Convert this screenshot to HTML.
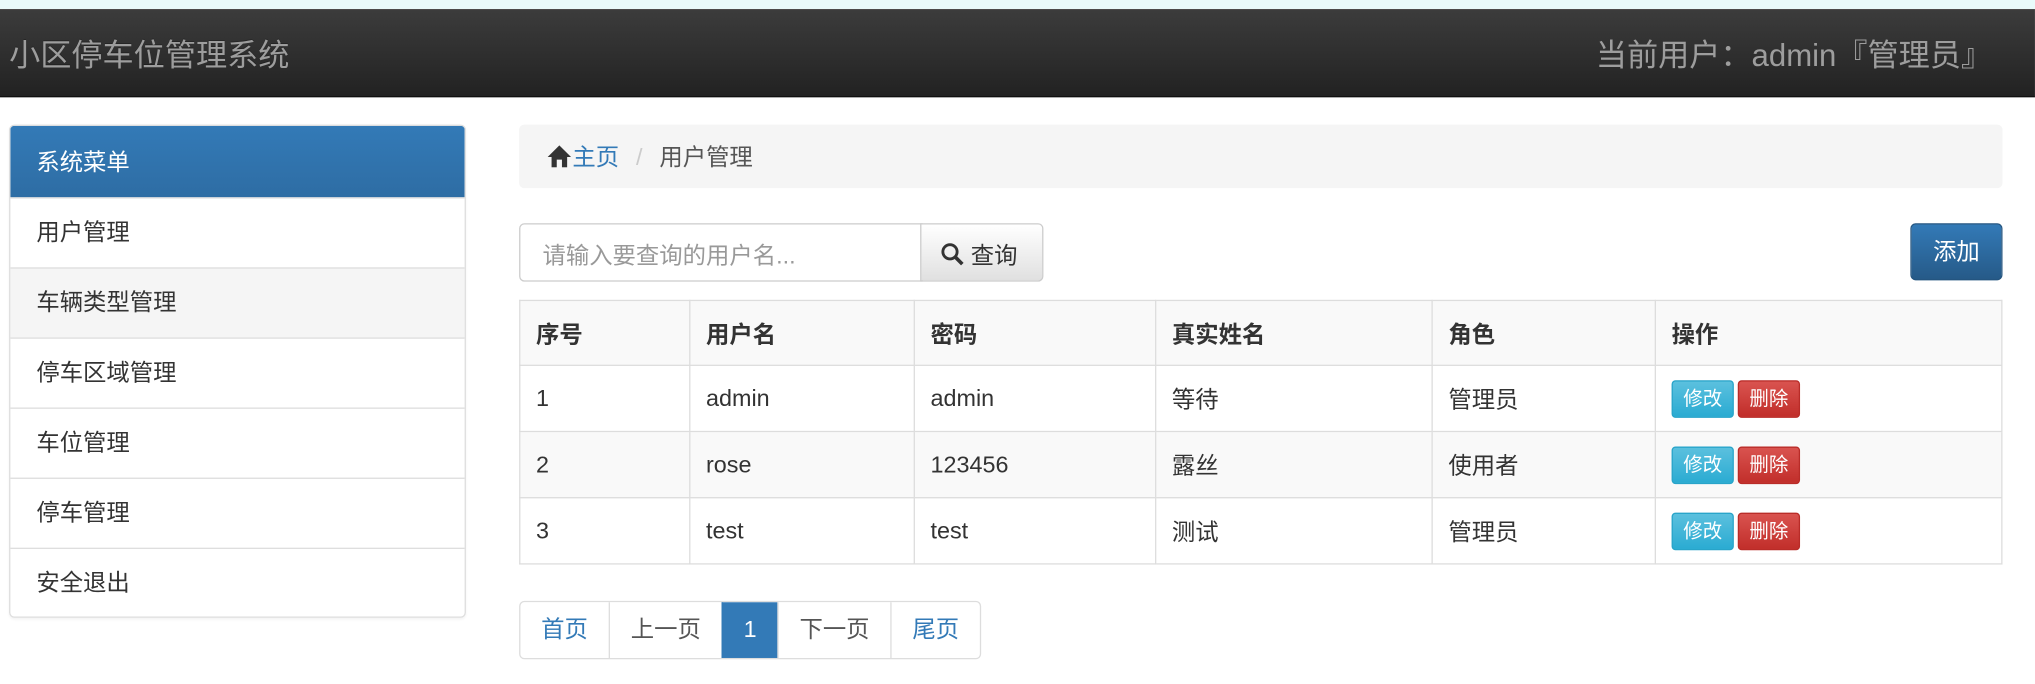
<!DOCTYPE html>
<html><head><meta charset="utf-8"><style>
*{box-sizing:border-box;margin:0;padding:0}
html,body{width:2035px;height:684px;overflow:hidden;background:#fff}
#w{width:1568px;height:527px;transform:scale(1.2978);transform-origin:0 0;position:relative;font-family:"Liberation Sans","Noto Sans CJK SC",sans-serif;color:#333;font-size:18px}
.a{position:absolute}
#top{left:0;top:0;width:1568px;height:7px;background:#e9fbfb}
#nav{left:0;top:7px;width:1568px;height:68px;background:linear-gradient(#3c3c3c,#222);border-bottom:1px solid #080808}
#nav .t{position:absolute;left:7px;top:16px;font-size:24px;color:#9d9d9d;text-shadow:0 -1px 0 rgba(0,0,0,.25)}
#nav .u{position:absolute;right:33px;top:16px;font-size:24px;color:#9d9d9d}
#side{left:7px;top:96px;width:352px;height:380px;border:1px solid #ddd;border-radius:4px;overflow:hidden;box-shadow:0 1px 2px rgba(0,0,0,.05)}
#side .h{height:55px;background:linear-gradient(#337ab7,#2e6da4);color:#fff;padding:14px 20px;font-size:18px}
#side .i{height:54px;border-top:1px solid #ddd;padding:12px 20px;font-size:18px}
#bc{left:400px;top:96px;width:1143px;height:49px;background:#f5f5f5;border-radius:4px;padding:11px 21px;font-size:18px}
#bc .l{color:#337ab7}
#inp{left:400px;top:172px;width:311px;height:45px;border:1px solid #ccc;border-radius:4px 0 0 4px;padding:10px 17px;color:#999}
#sb{left:709px;top:172px;width:95px;height:45px;border:1px solid #ccc;border-radius:0 4px 4px 0;background:linear-gradient(#fff,#e0e0e0);padding:10px 15px}
#add{left:1472px;top:172px;width:71px;height:44px;border-radius:4px;background:linear-gradient(#337ab7,#265a88);border:1px solid #245580;color:#fff;text-align:center;line-height:42px}
table{position:absolute;left:400px;top:231px;width:1143px;border-collapse:collapse}
td,th{border:1px solid #ddd;padding:0 12px;text-align:left;font-size:18px;vertical-align:middle}
th{height:50px;font-weight:bold;background:#f9f9f9}
td{height:51px}
tr.s td{background:#f9f9f9}
.b{display:inline-block;width:48px;height:29px;border-radius:3px;color:#fff;font-size:15px;text-align:center;line-height:27px;vertical-align:middle}
.e{background:linear-gradient(#5bc0de,#2aabd2);border:1px solid #28a4c9}
.d{background:linear-gradient(#d9534f,#c12e2a);border:1px solid #b92c28;margin-left:3px}
#pg{left:400px;top:463px;height:45px;display:flex;border:1px solid #ddd;border-radius:4px;overflow:hidden}
#pg div{height:43px;line-height:43px;padding:0 16px;border-left:1px solid #ddd;color:#337ab7}
#pg div:first-child{border-left:none}
#pg .g{color:#555}
#pg .ac{background:#337ab7;color:#fff;border-color:#337ab7}
</style></head><body><div id="w">
<div class="a" id="top"></div>
<div class="a" id="nav"><div class="t">小区停车位管理系统</div><div class="u">当前用户：admin『管理员』</div></div>
<div class="a" id="side"><div class="h">系统菜单</div>
<div class="i">用户管理</div><div class="i" style="background:#f5f5f5">车辆类型管理</div><div class="i">停车区域管理</div><div class="i">车位管理</div><div class="i">停车管理</div><div class="i">安全退出</div></div>
<div class="a" id="bc"><svg width="20" height="18" viewBox="0 0 20 18" style="vertical-align:-2px"><path d="M10 1 L1 10 H4 V18 H8 V12 H12 V18 H16 V10 H19 Z" fill="#333"/></svg><span class="l">主页</span> <span style="color:#ccc;padding:0 8px">/</span> <span style="color:#555">用户管理</span></div>
<div class="a" id="inp">请输入要查询的用户名...</div>
<div class="a" id="sb"><svg width="18" height="18" viewBox="0 0 18 18" style="vertical-align:-2px"><circle cx="7" cy="7" r="5.5" stroke="#333" stroke-width="2.2" fill="none"/><path d="M11 11 L16.5 16.5" stroke="#333" stroke-width="2.8"/></svg> 查询</div>
<div class="a" id="add">添加</div>
<table>
<tr><th style="width:131px">序号</th><th style="width:173px">用户名</th><th style="width:186px">密码</th><th style="width:213px">真实姓名</th><th style="width:172px">角色</th><th>操作</th></tr>
<tr><td>1</td><td>admin</td><td>admin</td><td>等待</td><td>管理员</td><td><span class="b e">修改</span><span class="b d">删除</span></td></tr>
<tr class="s"><td>2</td><td>rose</td><td>123456</td><td>露丝</td><td>使用者</td><td><span class="b e">修改</span><span class="b d">删除</span></td></tr>
<tr><td>3</td><td>test</td><td>test</td><td>测试</td><td>管理员</td><td><span class="b e">修改</span><span class="b d">删除</span></td></tr>
</table>
<div class="a" id="pg"><div>首页</div><div class="g">上一页</div><div class="ac">1</div><div class="g">下一页</div><div>尾页</div></div>
</div></body></html>
